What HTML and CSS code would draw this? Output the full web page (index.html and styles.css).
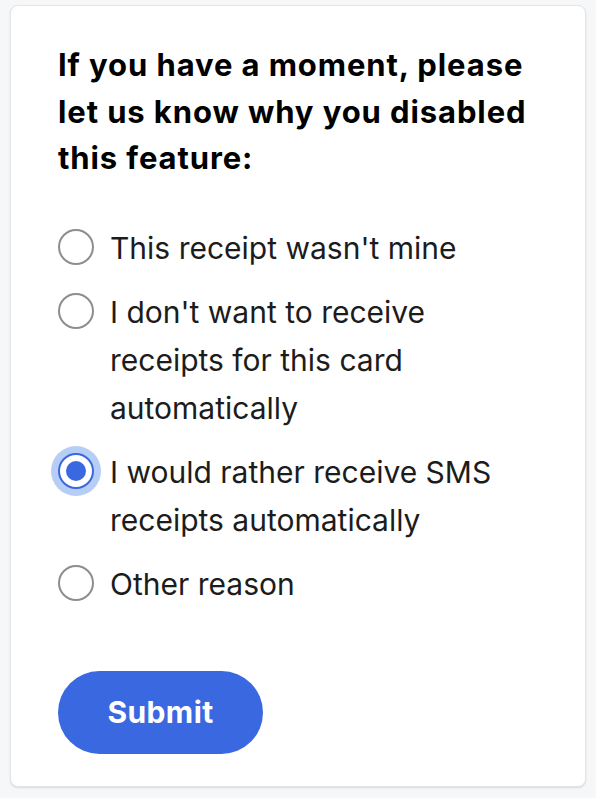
FILE: index.html
```html
<!DOCTYPE html>
<html>
<head>
<meta charset="utf-8">
<link rel="stylesheet" href="styles.css">
</head>
<body>
<form class="card">
  <h1 class="title">If you have a moment, please let us know why you disabled this feature:</h1>
  <div class="options">
    <label class="option">
      <span class="radio"></span>
      <span class="label">This receipt wasn't mine</span>
    </label>
    <label class="option">
      <span class="radio"></span>
      <span class="label">I don't want to receive receipts for this card automatically</span>
    </label>
    <label class="option selected">
      <span class="radio"><span class="dot"></span></span>
      <span class="label">I would rather receive SMS receipts automatically</span>
    </label>
    <label class="option">
      <span class="radio"></span>
      <span class="label">Other reason</span>
    </label>
  </div>
  <button type="button" class="submit">Submit</button>
</form>
</body>
</html>
```
FILE: styles.css
```css
html, body {
  margin: 0;
  padding: 0;
  background: #f6f7f9;
}
body {
  padding: 5px 10px 12px;
  font-family: Inter, "Noto Sans", sans-serif;
  color: #1a1a1a;
}
.card {
  box-sizing: border-box;
  width: 576px;
  height: 782px;
  background: #fff;
  border: 1px solid #e3e5e8;
  border-radius: 8px;
  box-shadow: 0 1px 2px rgba(0,0,0,0.12);
  padding: 36px 47px 0;
  display: flex;
  flex-direction: column;
}
.title {
  margin: 0;
  font-size: 31px;
  line-height: 46.5px;
  font-weight: 700;
  color: #000;
  letter-spacing: 0.9px;
}
.options {
  margin-top: 42px;
  display: flex;
  flex-direction: column;
  gap: 16px;
}
.option {
  display: flex;
  align-items: flex-start;
  gap: 16px;
  font-size: 30px;
  line-height: 48px;
  color: #1c1c1c;
}
.radio {
  flex: none;
  box-sizing: border-box;
  width: 36px;
  height: 36px;
  margin-top: 5px;
  border: 2px solid #8d8d8d;
  border-radius: 50%;
  background: #fff;
  display: flex;
  align-items: center;
  justify-content: center;
}
.selected .radio {
  border-color: #3a68e0;
  box-shadow: 0 0 0 7px #b6cdf6;
}
.dot {
  width: 20px;
  height: 20px;
  border-radius: 50%;
  background: #3a68e0;
}
.submit {
  margin-top: 63px;
  align-self: flex-start;
  width: 205px;
  height: 83px;
  border: none;
  border-radius: 42px;
  background: #3a68e0;
  color: #fff;
  font-family: Inter, "Noto Sans", sans-serif;
  font-size: 30px;
  font-weight: 700;
  letter-spacing: 0.4px;
  padding: 0;
}
```
